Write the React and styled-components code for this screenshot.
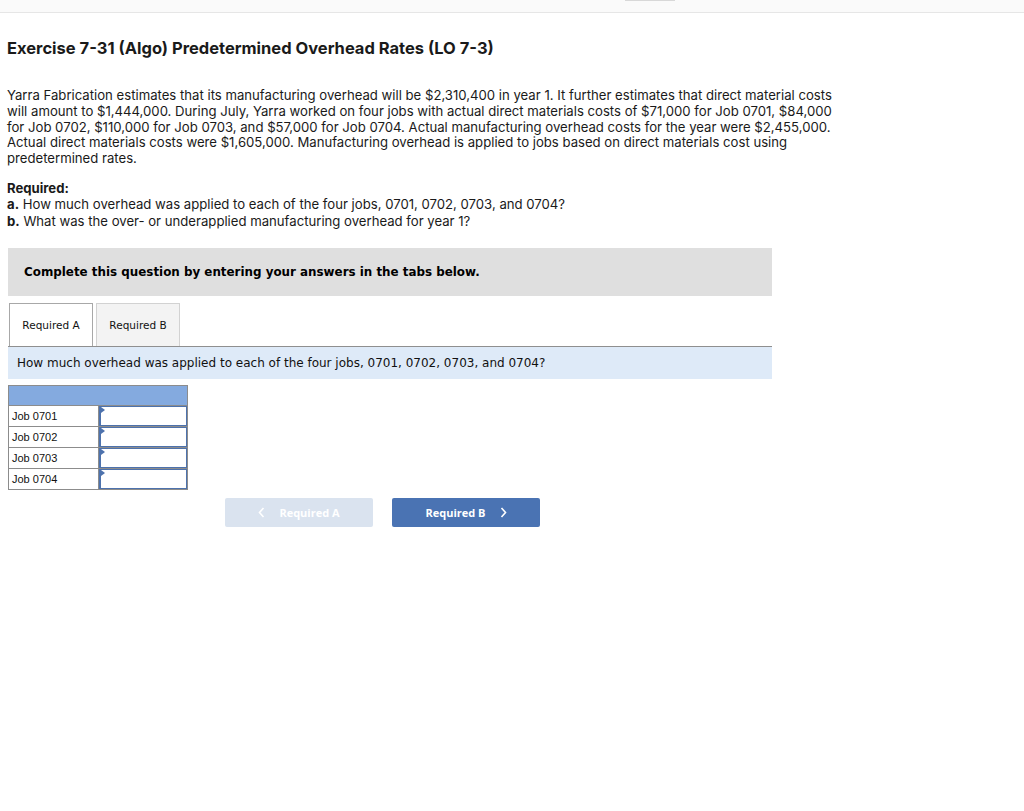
import React from "react";
import styled, { createGlobalStyle } from "styled-components";

const Global = createGlobalStyle`
  html, body { margin: 0; padding: 0; background: #fff; }
  body { font-family: "Inter", "Liberation Sans", sans-serif; color: #1a1a1a; }
`;

const TopBar = styled.header`
  height: 12px;
  background: #fafafa;
  border-bottom: 1px solid #e6e6e6;
  display: flex;
  justify-content: flex-start;
  padding-left: 625px;
`;

const TopMark = styled.div`
  width: 50px;
  height: 1px;
  background: #d8d8d8;
`;

const Main = styled.main`
  padding: 0 8px 0 7px;
`;

const Title = styled.h1`
  margin: 25px 0 0;
  font-size: 16.5px;
  font-weight: 700;
  line-height: 20px;
  color: #1a1a1a;
`;

const Body = styled.p`
  margin: 30px 0 0;
  font-size: 13.15px;
  line-height: 15.75px;
`;

const Required = styled.div`
  margin-top: 13px;
  font-size: 13.15px;
  line-height: 16.5px;
  b { font-weight: 700; }
`;

const Instruction = styled.div`
  margin: 19px 0 0 1px;
  width: 764px;
  height: 48px;
  background: #dfdfdf;
  display: flex;
  align-items: center;
  padding-left: 16px;
  box-sizing: border-box;
  font-family: "DejaVu Sans", Verdana, sans-serif;
  font-weight: 700;
  font-size: 11.9px;
  color: #000;
`;

const Tabs = styled.div`
  margin: 7px 0 0 1px;
  width: 764px;
  display: flex;
  gap: 3px;
  padding-left: 1px;
  box-sizing: border-box;
  border-bottom: 1px solid #8f8f8f;
`;

const Tab = styled.div`
  width: 84px;
  height: 43px;
  box-sizing: border-box;
  display: flex;
  align-items: center;
  justify-content: center;
  font-family: "DejaVu Sans", Verdana, sans-serif;
  font-size: 10.5px;
  color: #111;
  border: 1px solid ${(p) => (p.active ? "#a8a8a8" : "#d2d2d2")};
  border-bottom: none;
  background: ${(p) => (p.active ? "#fff" : "#f3f3f3")};
`;

const Prompt = styled.div`
  margin-left: 1px;
  width: 764px;
  height: 32px;
  background: #deeaf8;
  display: flex;
  align-items: center;
  padding-left: 9px;
  box-sizing: border-box;
  font-family: "DejaVu Sans", Verdana, sans-serif;
  font-size: 12px;
  color: #111;
`;

const Grid = styled.table`
  margin: 6px 0 0 1px;
  border-collapse: collapse;
  border: 1px solid #8c8c8c;
  font-family: "Liberation Sans", Arial, sans-serif;
  font-size: 11px;
`;

const HeadCell = styled.td`
  height: 19px;
  background: #84aadf;
  padding: 0;
`;

const Label = styled.td`
  width: 86px;
  height: 20px;
  padding: 0 0 0 3px;
  border: 1px solid #8c8c8c;
  color: #111;
`;

const InputCell = styled.td`
  width: 88px;
  padding: 0;
  border: 1px solid #8c8c8c;
  position: relative;
`;

const Input = styled.input`
  display: block;
  width: 100%;
  height: 20px;
  box-sizing: border-box;
  border: 1px solid #4d72ad;
  border-left-width: 2px;
  outline: none;
  background: #fff;
`;

const Flag = styled.span`
  position: absolute;
  left: 2px;
  top: 1px;
  width: 0;
  height: 0;
  border-top: 3px solid transparent;
  border-bottom: 3px solid transparent;
  border-left: 4px solid #4d72ad;
`;

const Nav = styled.div`
  margin: 8px 0 0 218px;
  display: flex;
  gap: 19px;
`;

const NavButton = styled.button`
  width: 148px;
  height: 29px;
  border: none;
  border-radius: 2px;
  background: ${(p) => (p.disabled ? "#dae3ef" : "#4a73b3")};
  color: #fff;
  font-family: "Open Sans", "Liberation Sans", sans-serif;
  font-weight: 700;
  font-size: 11px;
  display: flex;
  align-items: center;
  justify-content: center;
  gap: 14px;
  padding: 0;
  cursor: ${(p) => (p.disabled ? "default" : "pointer")};
`;

const Chevron = ({ dir }) => (
  <svg width="7" height="11" viewBox="0 0 7 11" fill="none">
    <path
      d={dir === "left" ? "M5.5 1 L1.5 5.5 L5.5 10" : "M1.5 1 L5.5 5.5 L1.5 10"}
      stroke="#fff"
      strokeWidth="1.6"
    />
  </svg>
);

const jobs = ["Job 0701", "Job 0702", "Job 0703", "Job 0704"];

export default function App() {
  return (
    <>
      <Global />
      <TopBar>
        <TopMark />
      </TopBar>
      <Main>
        <Title>Exercise 7-31 (Algo) Predetermined Overhead Rates (LO 7-3)</Title>
        <Body>
          Yarra Fabrication estimates that its manufacturing overhead will be $2,310,400 in year 1. It further estimates that direct material costs
          <br />
          will amount to $1,444,000. During July, Yarra worked on four jobs with actual direct materials costs of $71,000 for Job 0701, $84,000
          <br />
          for Job 0702, $110,000 for Job 0703, and $57,000 for Job 0704. Actual manufacturing overhead costs for the year were $2,455,000.
          <br />
          Actual direct materials costs were $1,605,000. Manufacturing overhead is applied to jobs based on direct materials cost using
          <br />
          predetermined rates.
        </Body>
        <Required>
          <b>Required:</b>
          <br />
          <b>a.</b> How much overhead was applied to each of the four jobs, 0701, 0702, 0703, and 0704?
          <br />
          <b>b.</b> What was the over- or underapplied manufacturing overhead for year 1?
        </Required>
        <Instruction>Complete this question by entering your answers in the tabs below.</Instruction>
        <Tabs>
          <Tab active>Required A</Tab>
          <Tab>Required B</Tab>
        </Tabs>
        <Prompt>How much overhead was applied to each of the four jobs, 0701, 0702, 0703, and 0704?</Prompt>
        <Grid>
          <tbody>
            <tr>
              <HeadCell colSpan={2} />
            </tr>
            {jobs.map((j) => (
              <tr key={j}>
                <Label>{j}</Label>
                <InputCell>
                  <Input type="text" aria-label={j} />
                  <Flag />
                </InputCell>
              </tr>
            ))}
          </tbody>
        </Grid>
        <Nav>
          <NavButton disabled>
            <Chevron dir="left" />
            Required A
          </NavButton>
          <NavButton>
            Required B
            <Chevron dir="right" />
          </NavButton>
        </Nav>
      </Main>
    </>
  );
}
